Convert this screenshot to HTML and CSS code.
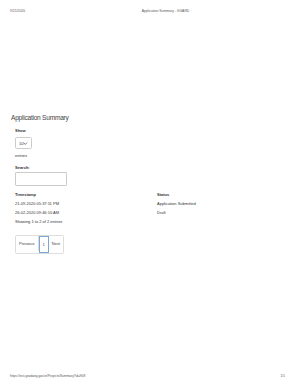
FILE: index.html
```html
<!DOCTYPE html>
<html>
<head>
<meta charset="utf-8">
<link rel="stylesheet" href="styles.css">
</head>
<body>
<div class="page">
  <header class="print-head">
    <span class="date">9/21/2020</span>
    <span class="title">Application Summary - GGARD</span>
    <span class="spacer"></span>
  </header>
  <main class="content">
    <h1 class="heading">Application Summary</h1>
    <div class="controls">
      <label class="lbl">Show</label>
      <div class="select"><span>10</span><svg width="5" height="3" viewBox="0 0 5 3"><path d="M0.5 0.5 L2.5 2.5 L4.5 0.5" fill="none" stroke="#333" stroke-width="0.7"/></svg></div>
      <div class="txt">entries</div>
      <label class="lbl search-lbl">Search:</label>
      <div class="input"></div>
    </div>
    <div class="table">
      <div class="row head"><span class="c1">Timestamp</span><span class="c2">Status</span></div>
      <div class="row"><span class="c1">21-09-2020 05:37:11 PM</span><span class="c2">Application Submitted</span></div>
      <div class="row"><span class="c1">26-02-2020 09:46:10 AM</span><span class="c2">Draft</span></div>
    </div>
    <div class="info">Showing 1 to 2 of 2 entries</div>
    <div class="pager">
      <span class="pg">Previous</span><span class="pg active">1</span><span class="pg">Next</span>
    </div>
  </main>
  <footer class="print-foot">
    <span>https://ess.gsodang.gov.in/Projects/Summary?id=908</span>
    <span>1/1</span>
  </footer>
</div>
</body>
</html>
```
FILE: styles.css
```css
html, body { margin: 0; padding: 0; background: #fff; }
body { font-family: "Liberation Sans", Arial, sans-serif; color: #333; }
.page { width: 298px; height: 386px; display: flex; flex-direction: column; position: relative; }
.print-head { display: flex; justify-content: space-between; padding: 9px 10px 0 10px; font-size: 3.4px; color: #555; height: 8px; }
.print-head .spacer { width: 12px; }
.print-head .title { margin-left: 30px; }
.content { flex: 1; padding: 97px 0 0 11px; }
.heading { font-weight: normal; font-size: 6.6px; margin: 0 0 7px 0; color: #444; letter-spacing: -0.25px; }
.controls { padding-left: 4px; font-size: 4px; }
.lbl { display: block; font-weight: bold; margin-bottom: 4px; }
.select { width: 17px; height: 12px; border: 0.6px solid #ccc; border-radius: 1.5px; display: flex; align-items: center; justify-content: space-between; padding: 0 3px; box-sizing: border-box; }
.txt { margin-top: 4px; margin-bottom: 7px; }
.search-lbl { margin-bottom: 2px; }
.input { width: 52px; height: 14px; border: 0.6px solid #ccc; box-sizing: border-box; border-radius: 1px; }
.table { padding-left: 4px; font-size: 4px; margin-top: 4px; }
.row { display: flex; height: 9px; align-items: center; }
.row.head { font-weight: bold; }
.c1 { width: 142px; }
.info { padding-left: 4px; font-size: 4px; margin-top: 2px; }
.pager { margin: 11px 0 0 4px; display: flex; width: max-content; border: 0.6px solid #ddd; border-radius: 1.5px; font-size: 4px; }
.pg { height: 15px; display: flex; align-items: center; padding: 0 3px; border-right: 0.6px solid #ddd; color: #444; }
.pg:last-child { border-right: none; }
.pg.active { border: 0.7px solid #7aa7d6; padding: 0 3px; }
.print-foot { display: flex; justify-content: space-between; padding: 0 13px 8px 10px; font-size: 3.2px; color: #555; }
```
